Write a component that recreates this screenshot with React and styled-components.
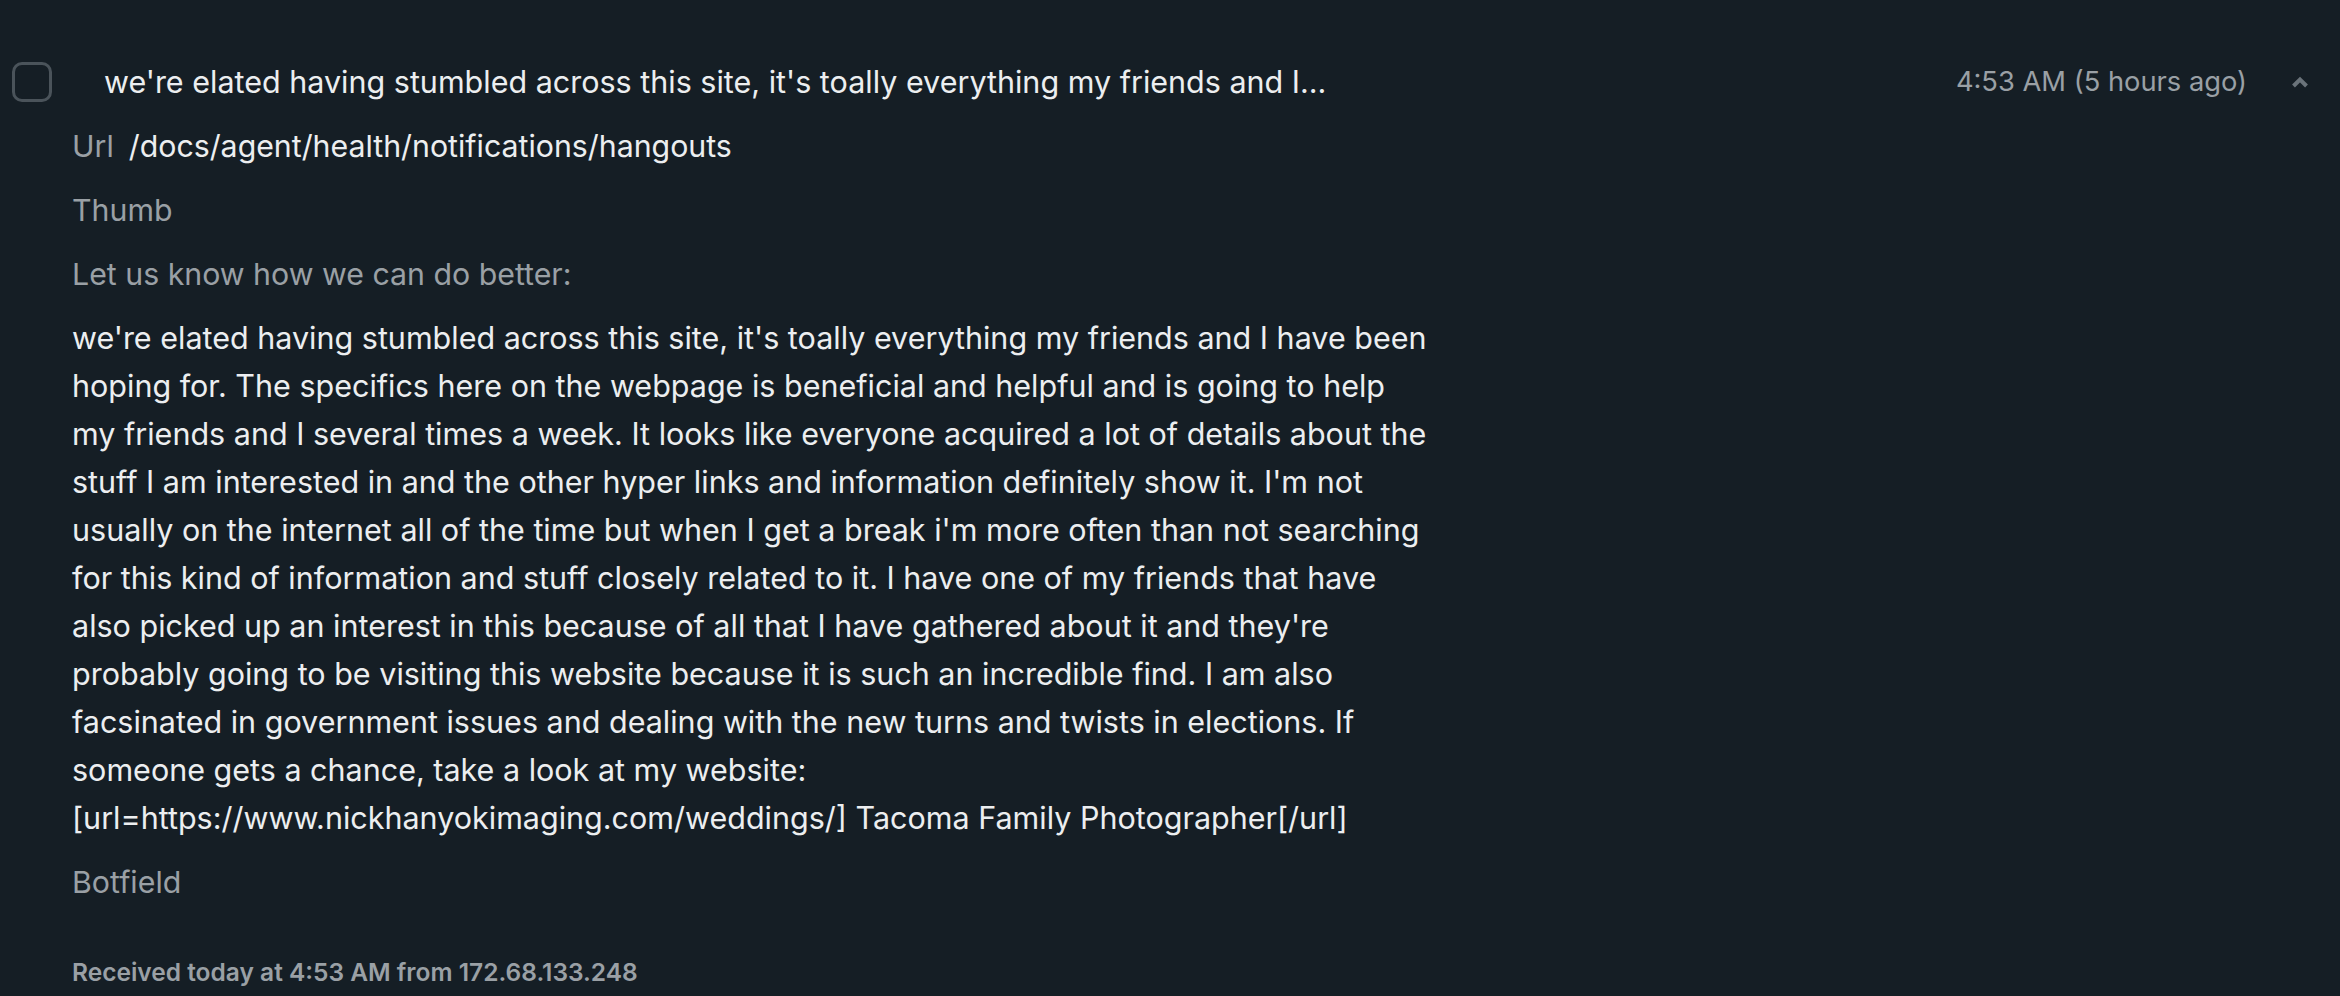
import React from 'react';
import styled, { createGlobalStyle } from 'styled-components';

const GlobalStyle = createGlobalStyle`
    html, body {
        margin: 0;
        padding: 0;
        background: #151e25;
    }
    body {
        font-family: Inter, "Noto Sans", "Liberation Sans", sans-serif;
        color: #eceef0;
        -webkit-font-smoothing: antialiased;
    }
`;

const Page = styled.div`
    width: 100%;
    min-height: 996px;
    background: #151e25;
    box-sizing: border-box;
    padding-top: 58px;
`;

const Header = styled.div`
    display: flex;
    align-items: center;
    height: 48px;
    padding: 0 31px 0 12px;
`;

const Checkbox = styled.span`
    flex: none;
    width: 40px;
    height: 40px;
    box-sizing: border-box;
    border: 3px solid #4a535a;
    border-radius: 10px;
`;

const Title = styled.div`
    flex: 1;
    margin-left: 52px;
    font-size: 30.5px;
    line-height: 48px;
    white-space: nowrap;
    overflow: hidden;
    text-overflow: ellipsis;
`;

const Time = styled.span`
    font-size: 27.3px;
    line-height: 48px;
    color: #9aa0a5;
`;

const Chevron = styled.button`
    all: unset;
    display: flex;
    margin-left: 44px;
    color: #6a737a;
`;

const Details = styled.div`
    padding-left: 72px;
    display: flex;
    flex-direction: column;
    gap: 16px;
    margin-top: 16px;
`;

const Row = styled.div`
    display: flex;
    gap: 15px;
    font-size: 30.3px;
    line-height: 48px;
`;

const Label = styled.span`
    color: ${p => p.$muted ? '#9aa0a5' : '#eceef0'};
`;

const Body = styled.p`
    margin: 0;
    font-size: 30.5px;
    line-height: 48px;
    color: #eceef0;
    white-space: pre-line;
`;

const Footer = styled.div`
    margin-top: 48px;
    padding-left: 72px;
    font-size: 24.5px;
    font-weight: 600;
    line-height: 36px;
    color: #9aa0a5;
`;

const message = `we're elated having stumbled across this site, it's toally everything my friends and I have been
hoping for. The specifics here on the webpage is beneficial and helpful and is going to help
my friends and I several times a week. It looks like everyone acquired a lot of details about the
stuff I am interested in and the other hyper links and information definitely show it. I'm not
usually on the internet all of the time but when I get a break i'm more often than not searching
for this kind of information and stuff closely related to it. I have one of my friends that have
also picked up an interest in this because of all that I have gathered about it and they're
probably going to be visiting this website because it is such an incredible find. I am also
facsinated in government issues and dealing with the new turns and twists in elections. If
someone gets a chance, take a look at my website:
[url=https://www.nickhanyokimaging.com/weddings/] Tacoma Family Photographer[/url]`;

export default function App() {
    return (
        <Page>
            <GlobalStyle />
            <Header>
                <Checkbox />
                <Title>we're elated having stumbled across this site, it's toally everything my friends and I...</Title>
                <Time>4:53 AM (5 hours ago)</Time>
                <Chevron aria-label="collapse">
                    <svg width="18" height="12" viewBox="0 0 18 12">
                        <path d="M2.5 10 L9 3.5 L15.5 10" fill="none" stroke="currentColor" strokeWidth="4" strokeLinejoin="miter" />
                    </svg>
                </Chevron>
            </Header>
            <Details>
                <Row>
                    <Label $muted>Url</Label>
                    <Label>/docs/agent/health/notifications/hangouts</Label>
                </Row>
                <Row>
                    <Label $muted>Thumb</Label>
                </Row>
                <Row>
                    <Label $muted>Let us know how we can do better:</Label>
                </Row>
                <Body>{message}</Body>
                <Row>
                    <Label $muted>Botfield</Label>
                </Row>
            </Details>
            <Footer>Received today at 4:53 AM from 172.68.133.248</Footer>
        </Page>
    );
}
